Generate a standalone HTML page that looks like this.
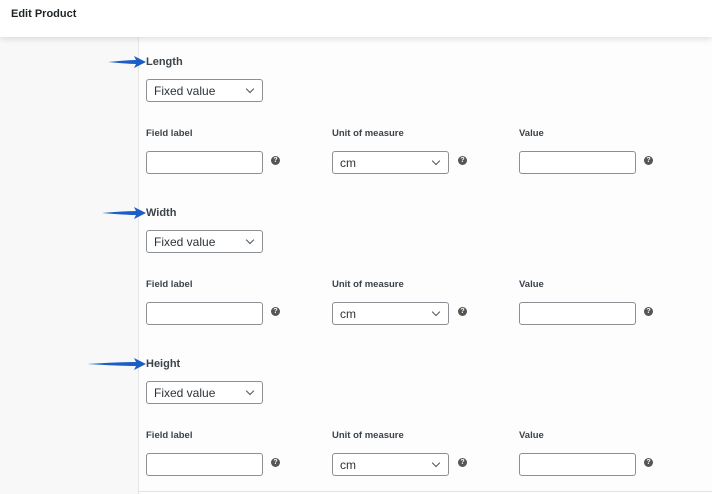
<!DOCTYPE html>
<html><head><style>
body{margin:0;width:712px;height:494px;overflow:hidden;font-family:"Liberation Sans",sans-serif;background:#fff;position:relative}
.hdr{position:absolute;left:0;top:0;width:712px;height:37px;background:#fff;box-shadow:0 2px 6px rgba(0,0,0,.12);z-index:2}
.hdr span{position:absolute;left:11px;top:8px;font-size:11px;font-weight:bold;color:#1d2327}
.side{position:absolute;left:0;top:37px;width:138px;height:457px;background:#f8f8f8;border-right:1px solid #e6e6e6}
.main{position:absolute;left:139px;top:37px;width:573px;height:454px;background:#fdfdfd;border-bottom:1px solid #e2e2e2}
.a{position:absolute}
h4{position:absolute;margin:0;font-size:11px;font-weight:bold;color:#3c434a}
.sel,.inp{position:absolute;box-sizing:border-box;height:23px;width:117px;border:1px solid #8c8f94;border-radius:3px;background:#fff;font-size:12px;color:#2c3338;padding:4px 0 0 7px}
.sel:after{content:"";position:absolute;right:9px;top:6px;width:5px;height:5px;border-right:1.3px solid #50575e;border-bottom:1.3px solid #50575e;transform:rotate(45deg)}
.lb{position:absolute;font-size:9.5px;font-weight:bold;color:#3c434a}
.q{position:absolute;width:9px;height:9px;border-radius:50%;background:#555;color:#fff;font-size:7px;font-weight:bold;text-align:center;line-height:9px}
</style></head><body>
<div class="hdr"><span>Edit Product</span></div>
<div class="side"></div>
<div class="main"></div>
<div id="c"></div>
<script>
var ys=[0,151,302],names=["Length","Width","Height"],ax=[108,102,87],h="";
for(var i=0;i<3;i++){var y=ys[i];
h+='<h4 style="left:146px;top:'+(56+y)+'px">'+names[i]+'</h4>';
h+='<svg class="a" style="left:'+ax[i]+'px;top:'+(56+y)+'px" width="'+(146-ax[i])+'" height="12"><path d="M0 6 Q'+((146-ax[i])*0.5)+' 4.2 '+(146-ax[i]-10)+' 4 L'+(146-ax[i]-12)+' 0 L'+(146-ax[i])+' 6 L'+(146-ax[i]-12)+' 12 L'+(146-ax[i]-10)+' 8 Q'+((146-ax[i])*0.5)+' 7.8 0 6Z" fill="#1b5ec8"/></svg>';
h+='<div class="sel" style="left:146px;top:'+(79+y)+'px">Fixed value</div>';
h+='<div class="lb" style="left:146px;top:'+(128+y)+'px">Field label</div><div class="lb" style="left:332px;top:'+(128+y)+'px">Unit of measure</div><div class="lb" style="left:519px;top:'+(128+y)+'px">Value</div>';
h+='<div class="inp" style="left:146px;top:'+(151+y)+'px"></div><div class="q" style="left:271px;top:'+(156+y)+'px">?</div>';
h+='<div class="sel" style="left:332px;top:'+(151+y)+'px">cm</div><div class="q" style="left:458px;top:'+(156+y)+'px">?</div>';
h+='<div class="inp" style="left:519px;top:'+(151+y)+'px"></div><div class="q" style="left:644px;top:'+(156+y)+'px">?</div>';}
document.getElementById("c").innerHTML=h;
</script>
</body></html>
